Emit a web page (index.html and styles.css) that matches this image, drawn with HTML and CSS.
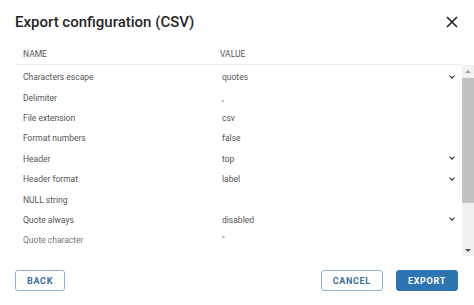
FILE: index.html
```html
<!DOCTYPE html>
<html>
<head>
  <title>Export configuration</title>
  <link rel="stylesheet" href="styles.css">
</head>
<body>
  <div class="dialog">
    <div class="dialog-header">
      <h1 class="title">Export configuration (CSV)</h1>
      <button class="close" aria-label="Close">
        <svg width="12" height="12" viewBox="0 0 12 12"><path d="M1 1L11 11M11 1L1 11" stroke="#222" stroke-width="1.6"/></svg>
      </button>
    </div>

    <div class="table-head">
      <div class="col-name">NAME</div>
      <div class="col-value">VALUE</div>
    </div>

    <div class="table-body">
      <!-- property rows -->
      <div class="rows">
        <div class="row"><div class="col-name">Characters escape</div><div class="col-value">quotes</div><span class="chevron"></span></div>
        <div class="row"><div class="col-name">Delimiter</div><div class="col-value">,</div></div>
        <div class="row"><div class="col-name">File extension</div><div class="col-value">csv</div></div>
        <div class="row"><div class="col-name">Format numbers</div><div class="col-value">false</div></div>
        <div class="row"><div class="col-name">Header</div><div class="col-value">top</div><span class="chevron"></span></div>
        <div class="row"><div class="col-name">Header format</div><div class="col-value">label</div><span class="chevron"></span></div>
        <div class="row"><div class="col-name">NULL string</div><div class="col-value"></div></div>
        <div class="row"><div class="col-name">Quote always</div><div class="col-value">disabled</div><span class="chevron"></span></div>
        <div class="row row-faded"><div class="col-name">Quote character</div><div class="col-value">"</div></div>
      </div>

      <!-- scrollbar (screenshots hide the native one) -->
      <div class="scrollbar">
        <span class="arrow arrow-up"></span>
        <div class="track"><div class="thumb"></div></div>
        <span class="arrow arrow-down"></span>
      </div>
    </div>

    <div class="dialog-footer">
      <button class="btn btn-outline">BACK</button>
      <div class="spacer"></div>
      <button class="btn btn-outline">CANCEL</button>
      <button class="btn btn-primary">EXPORT</button>
    </div>
  </div>
</body>
</html>
```

FILE: styles.css
```css
body {
  margin: 0;
  padding: 0;
  font-family: Roboto, "Liberation Sans", sans-serif;
  background: #fff;
  color: #333;
}

.dialog {
  width: 474px;
  height: 305px;
  display: flex;
  flex-direction: column;
}

/* Title bar */
.dialog-header {
  height: 44px;
  display: flex;
  align-items: center;
  padding: 0 15px;
}

.title {
  flex: 1;
  margin: 0;
  font-size: 15px;
  font-weight: 500;
  color: #262626;
}

.close {
  border: 0;
  background: none;
  padding: 0;
  width: 12px;
  height: 12px;
  margin-right: 1px;
  cursor: pointer;
  display: flex;
}

/* Table */
.table-head {
  display: flex;
  align-items: center;
  height: 20px;
  margin-left: 15px;
  margin-right: 12px;
  border-bottom: 1px solid #ececec;
  font-size: 8.5px;
  color: #555;
}

.table-head .col-value {
  margin-left: -2px;
}

.col-name {
  width: 199px;
  padding-left: 8px;
}

.col-value {
  flex: 1;
}

.table-body {
  height: 191px;
  display: flex;
  margin-left: 15px;
}

.rows {
  flex: 1;
  overflow: hidden;
  padding-top: 2px;
}

.row {
  display: flex;
  align-items: center;
  height: 20.4px;
  font-size: 8.5px;
  color: #555;
}

.row-faded {
  color: #777;
}

.chevron {
  width: 3px;
  height: 3px;
  border-right: 1.6px solid #222;
  border-bottom: 1.6px solid #222;
  transform: rotate(45deg);
  margin: -3px 8px 0 0;
}

/* Scrollbar */
.scrollbar {
  width: 12px;
  display: flex;
  flex-direction: column;
  background: #f1f1f1;
}

.arrow {
  height: 12px;
  display: flex;
  align-items: center;
  justify-content: center;
}

.arrow:before {
  content: "";
  width: 0;
  height: 0;
  border-left: 3px solid transparent;
  border-right: 3px solid transparent;
}

.arrow-up:before {
  border-bottom: 3px solid #a3a3a3;
}

.arrow-down:before {
  border-top: 3px solid #505050;
}

.track {
  flex: 1;
  padding-top: 1px;
}

.thumb {
  height: 125px;
  background: #c1c1c1;
}

/* Footer buttons */
.dialog-footer {
  flex: 1;
  display: flex;
  align-items: center;
  padding: 0 16px 0 15px;
  gap: 13px;
}

.spacer {
  flex: 1;
}

.btn {
  height: 21px;
  border-radius: 3px;
  font-family: Roboto, "Liberation Sans", sans-serif;
  font-size: 9px;
  font-weight: 700;
  letter-spacing: 0.7px;
  padding: 0 11px;
  cursor: pointer;
}

.btn-outline {
  background: #fff;
  border: 1px solid #8db2d4;
  color: #3c6e9c;
}

.btn-primary {
  background: #2d74b2;
  border: 1px solid #2d74b2;
  color: #fff;
}
```
